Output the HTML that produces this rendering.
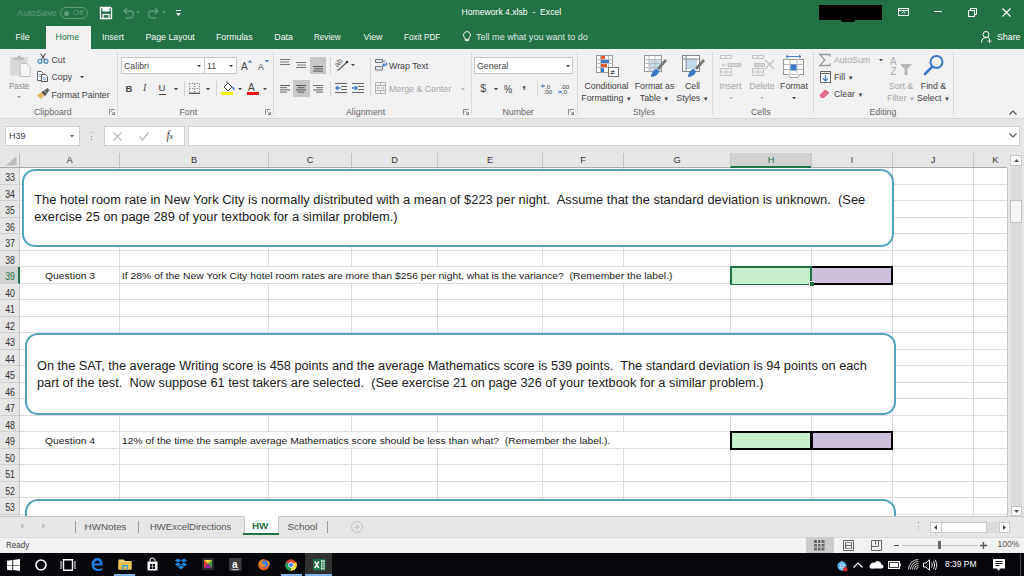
<!DOCTYPE html>
<html><head><meta charset="utf-8"><title>Excel</title>
<style>
*{margin:0;padding:0;box-sizing:border-box}
html,body{width:1024px;height:576px;overflow:hidden}
body{position:relative;font-family:"Liberation Sans",sans-serif;background:#fff}
.a{position:absolute}
.t{position:absolute;white-space:nowrap}
svg{position:absolute;overflow:visible}
</style></head><body>
<div class="a" style="left:0px;top:0px;width:1024px;height:49px;background:#217346"></div>
<div class="t" style="left:17px;top:3.8000000000000007px;line-height:18.4px;font-size:9.2px;color:#5e9b78;">AutoSave</div>
<div class="a" style="left:60px;top:7px;width:28px;height:12px;border:1px solid #5e9b78;border-radius:6px"></div>
<div class="a" style="left:64px;top:10.5px;width:5px;height:5px;background:#5e9b78;border-radius:50%"></div>
<div class="t" style="left:73px;top:5px;line-height:16px;font-size:8px;color:#5e9b78;">Off</div>
<svg style="left:100px;top:7px" width="12" height="12" viewBox="0 0 12 12"><path d="M0.5 0.5h10l1 1v10h-11z" fill="none" stroke="#fff" stroke-width="1.3"/><rect x="2.5" y="1" width="7" height="3.5" fill="#fff"/><rect x="3" y="7.5" width="6" height="4" fill="none" stroke="#fff" stroke-width="1.2"/></svg>
<svg style="left:122px;top:7px" width="12" height="12" viewBox="0 0 12 12"><path d="M3 4h5a3.5 3.5 0 0 1 0 7H4" fill="none" stroke="#5e9b78" stroke-width="1.3"/><path d="M5 1L2 4l3 3" fill="none" stroke="#5e9b78" stroke-width="1.3"/></svg>
<svg style="left:136px;top:11px" width="5" height="3" viewBox="0 0 5 3"><path d="M0 0h4l-2 2.5z" fill="#5e9b78"/></svg>
<svg style="left:148px;top:7px" width="12" height="12" viewBox="0 0 12 12"><path d="M9 4H4a3.5 3.5 0 0 0 0 7h4" fill="none" stroke="#5e9b78" stroke-width="1.3"/><path d="M7 1l3 3-3 3" fill="none" stroke="#5e9b78" stroke-width="1.3"/></svg>
<svg style="left:162px;top:11px" width="5" height="3" viewBox="0 0 5 3"><path d="M0 0h4l-2 2.5z" fill="#5e9b78"/></svg>
<svg style="left:176px;top:10px" width="6" height="7" viewBox="0 0 6 7"><rect x="0" y="0" width="5" height="1" fill="#fff"/><path d="M0 3h5l-2.5 3z" fill="#fff"/></svg>
<div class="t" style="left:461.5px;top:3.9499999999999993px;line-height:17.3px;font-size:8.65px;color:#fff;">Homework 4.xlsb&nbsp;&nbsp;-&nbsp;&nbsp;Excel</div>
<div class="a" style="left:818.5px;top:4.5px;width:63.5px;height:15px;background:#000"></div>
<div class="a" style="left:841px;top:18px;width:14px;height:4px;background:#000;border-radius:0 0 2px 2px"></div>
<svg style="left:898px;top:7.5px" width="11" height="8" viewBox="0 0 11 8"><rect x="0.5" y="0.5" width="10" height="7" fill="none" stroke="#fff" stroke-width="1"/><path d="M0.5 2.5h10" stroke="#fff" stroke-width="1"/><path d="M3.5 5.5l2-2 2 2" fill="none" stroke="#fff" stroke-width="0.9"/></svg>
<div class="a" style="left:934px;top:11px;width:8px;height:1px;background:#fff"></div>
<svg style="left:968px;top:7.5px" width="9" height="9" viewBox="0 0 9 9"><rect x="0.5" y="2.5" width="6" height="6" fill="none" stroke="#fff" stroke-width="1"/><path d="M2.5 2.5v-2h6v6h-2" fill="none" stroke="#fff" stroke-width="1"/></svg>
<svg style="left:1002px;top:7.5px" width="9" height="9" viewBox="0 0 9 9"><path d="M0.5 0.5l8 8M8.5 0.5l-8 8" stroke="#fff" stroke-width="1.1"/></svg>
<div class="a" style="left:46px;top:26px;width:45px;height:23px;background:#f1f1f1"></div>
<div class="t" style="left:15.5px;top:28.7px;line-height:17.6px;font-size:8.8px;color:#f4f8f5;">File</div>
<div class="t" style="left:55.6px;top:28.7px;line-height:17.6px;font-size:8.8px;color:#217346;">Home</div>
<div class="t" style="left:102px;top:28.7px;line-height:17.6px;font-size:8.8px;color:#f4f8f5;">Insert</div>
<div class="t" style="left:145.4px;top:28.7px;line-height:17.6px;font-size:8.8px;color:#f4f8f5;">Page Layout</div>
<div class="t" style="left:216px;top:28.7px;line-height:17.6px;font-size:8.8px;color:#f4f8f5;">Formulas</div>
<div class="t" style="left:274.3px;top:28.7px;line-height:17.6px;font-size:8.8px;color:#f4f8f5;">Data</div>
<div class="t" style="left:314.2px;top:28.7px;line-height:17.6px;font-size:8.8px;color:#f4f8f5;;transform:scaleX(0.92);transform-origin:0 50%">Review</div>
<div class="t" style="left:363.5px;top:28.7px;line-height:17.6px;font-size:8.8px;color:#f4f8f5;">View</div>
<div class="t" style="left:404.2px;top:28.7px;line-height:17.6px;font-size:8.8px;color:#f4f8f5;;transform:scaleX(0.93);transform-origin:0 50%">Foxit PDF</div>
<svg style="left:462.5px;top:31px" width="8" height="11" viewBox="0 0 8 11"><path d="M4 0.6a3.4 3.4 0 0 0-2 6.2v1.6h4V6.8a3.4 3.4 0 0 0-2-6.2z" fill="none" stroke="#e8f0eb" stroke-width="1"/><path d="M2 9.6h4" stroke="#e8f0eb" stroke-width="1"/></svg>
<div class="t" style="left:476px;top:28.7px;line-height:17.6px;font-size:8.8px;color:#dfe9e3;;transform:scaleX(1.03);transform-origin:0 50%">Tell me what you want to do</div>
<svg style="left:980.5px;top:30.5px" width="11" height="12" viewBox="0 0 11 12"><circle cx="5" cy="3.5" r="3" fill="none" stroke="#fff" stroke-width="1"/><path d="M0.5 11.5c0-3 2-5 4.5-5s3 .8 3.6 1.6" fill="none" stroke="#fff" stroke-width="1"/><path d="M8.5 8v4M6.5 10h4" stroke="#fff" stroke-width="1"/></svg>
<div class="t" style="left:997px;top:28.8px;line-height:17.6px;font-size:8.8px;color:#fff;">Share</div>
<div class="a" style="left:0px;top:49px;width:1024px;height:69px;background:#f1f1f1"></div>
<div class="a" style="left:0px;top:117.5px;width:1024px;height:1px;background:#d8d8d8"></div>
<div class="a" style="left:117px;top:52px;width:1px;height:62px;background:#dadada"></div>
<div class="a" style="left:273px;top:52px;width:1px;height:62px;background:#dadada"></div>
<div class="a" style="left:471px;top:52px;width:1px;height:62px;background:#dadada"></div>
<div class="a" style="left:577px;top:52px;width:1px;height:62px;background:#dadada"></div>
<div class="a" style="left:712px;top:52px;width:1px;height:62px;background:#dadada"></div>
<div class="a" style="left:813px;top:52px;width:1px;height:62px;background:#dadada"></div>
<div class="a" style="left:953px;top:52px;width:1px;height:62px;background:#dadada"></div>
<div class="a" style="left:183.5px;top:81px;width:1px;height:15px;background:#d4d4d4"></div>
<div class="a" style="left:216px;top:81px;width:1px;height:15px;background:#d4d4d4"></div>
<div class="a" style="left:329.5px;top:57px;width:1px;height:17px;background:#d4d4d4"></div>
<div class="a" style="left:329.5px;top:81px;width:1px;height:15px;background:#d4d4d4"></div>
<div class="a" style="left:369.5px;top:57px;width:1px;height:39px;background:#d4d4d4"></div>
<div class="a" style="left:536.6px;top:81px;width:1px;height:15px;background:#d4d4d4"></div>
<svg style="left:10px;top:55px" width="21" height="22" viewBox="0 0 21 22"><rect x="0.2" y="2" width="17.5" height="18.5" fill="#d9d8da"/><path d="M4 2.5h10v2.5H4z" fill="#bdbcbe"/><rect x="7.5" y="0.5" width="3" height="2.5" rx="1" fill="#bdbcbe"/><path d="M10.2 8.5h6.3l3.7 3.7v9.3h-10z" fill="#f4f3f5" stroke="#c0bfc1" stroke-width="1"/></svg>
<div class="t" style="left:9px;top:78.0px;line-height:17.6px;font-size:8.8px;color:#8c8c8c;;transform:scaleX(0.9);transform-origin:0 50%">Paste</div>
<svg style="left:16.5px;top:96px" width="4" height="3" viewBox="0 0 4 3"><path d="M0 0h4l-2 2.2z" fill="#a0a0a0"/></svg>
<svg style="left:36.5px;top:53px" width="12" height="11" viewBox="0 0 12 11"><path d="M3.5 0.5l4.5 6.5M8.5 0.5L4 7" stroke="#555" stroke-width="1.1" fill="none"/><circle cx="3" cy="8.3" r="2" fill="none" stroke="#4a86c8" stroke-width="1.2"/><circle cx="9" cy="8.3" r="2" fill="none" stroke="#4a86c8" stroke-width="1.2"/></svg>
<div class="t" style="left:51.5px;top:52.0px;line-height:17.6px;font-size:8.8px;color:#444;">Cut</div>
<svg style="left:37px;top:71px" width="11" height="11" viewBox="0 0 11 11"><path d="M0.5 0.5h4l1.5 1.5v7.5h-5.5z" fill="#fff" stroke="#666" stroke-width="1"/><path d="M1.8 3.5h2M1.8 5.5h2" stroke="#4a86c8" stroke-width="0.8"/><path d="M4.5 3.5h4l2 2v5h-6z" fill="#fff" stroke="#555" stroke-width="1"/><path d="M6 7h3M6 8.8h3" stroke="#4a86c8" stroke-width="0.8"/></svg>
<div class="t" style="left:51.5px;top:69.0px;line-height:17.6px;font-size:8.8px;color:#444;">Copy</div>
<svg style="left:79.5px;top:76px" width="4" height="3" viewBox="0 0 4 3"><path d="M0 0h4l-2 2.2z" fill="#444"/></svg>
<svg style="left:37px;top:88px" width="13" height="11" viewBox="0 0 13 11"><path d="M0 7.5l4-3.5 3.5 3.5-3.5 3.5z" fill="#e3b96c"/><path d="M4.5 4.5l2-2 3.5 3.5-2 2z" fill="#555"/><path d="M7 2.5l3.5-2.5 2 2-2.5 3.5z" fill="#666"/></svg>
<div class="t" style="left:51.5px;top:86.7px;line-height:17.6px;font-size:8.8px;color:#444;">Format Painter</div>
<div class="t" style="left:34px;top:104.0px;line-height:17.6px;font-size:8.8px;color:#666;">Clipboard</div>
<svg style="left:109px;top:109px" width="6" height="6" viewBox="0 0 6 6"><path d="M0.5 5.5v-5h5" fill="none" stroke="#8a8a8a" stroke-width="1"/><path d="M2 2l3.5 3.5M5.5 3v2.5H3" fill="none" stroke="#8a8a8a" stroke-width="1"/></svg>
<div class="a" style="left:121px;top:57px;width:84px;height:16.5px;background:#fff;border:1px solid #c6c6c6"></div>
<div class="a" style="left:204px;top:57px;width:32.5px;height:16.5px;background:#fff;border:1px solid #c6c6c6"></div>
<div class="t" style="left:124px;top:57.5px;line-height:17.6px;font-size:8.8px;color:#444;">Calibri</div>
<svg style="left:196.5px;top:64.5px" width="4" height="3" viewBox="0 0 4 3"><path d="M0 0h4l-2 2.2z" fill="#444"/></svg>
<div class="t" style="left:207px;top:57.5px;line-height:17.6px;font-size:8.8px;color:#444;">11</div>
<svg style="left:228.5px;top:64.5px" width="4" height="3" viewBox="0 0 4 3"><path d="M0 0h4l-2 2.2z" fill="#444"/></svg>
<div class="t" style="left:241px;top:56.8px;line-height:20px;font-size:10px;color:#444;">A</div>
<svg style="left:248px;top:59.5px" width="4" height="3" viewBox="0 0 4 3"><path d="M0 2.5l2-2.5 2 2.5z" fill="#3c78c3"/></svg>
<div class="t" style="left:258px;top:58.8px;line-height:17.0px;font-size:8.5px;color:#444;">A</div>
<svg style="left:264.5px;top:59.5px" width="4" height="3" viewBox="0 0 4 3"><path d="M0 0h4l-2 2.5z" fill="#3c78c3"/></svg>
<div class="t" style="left:125.5px;top:78.89999999999999px;line-height:19.0px;font-size:9.5px;color:#444;"><b>B</b></div>
<div class="t" style="left:143px;top:78.39999999999999px;line-height:20px;font-size:10px;color:#444;font-family:Liberation Serif"><i>I</i></div>
<div class="t" style="left:158.5px;top:78.3px;line-height:19.0px;font-size:9.5px;color:#444;">U</div>
<div class="a" style="left:158.5px;top:93.5px;width:7.5px;height:1px;background:#444"></div>
<svg style="left:173.5px;top:87.6px" width="4" height="3" viewBox="0 0 4 3"><path d="M0 0h4l-2 2.2z" fill="#444"/></svg>
<svg style="left:189px;top:82.5px" width="11" height="11" viewBox="0 0 11 11"><path d="M0.5 0.5h10v10M0.5 0.5v10M5.5 0.5v10M0.5 5.5h10" fill="none" stroke="#888" stroke-width="1" stroke-dasharray="1.2 1.3"/><path d="M0 10.3h11" stroke="#555" stroke-width="1.3"/></svg>
<svg style="left:205.5px;top:87.6px" width="4" height="3" viewBox="0 0 4 3"><path d="M0 0h4l-2 2.2z" fill="#444"/></svg>
<svg style="left:222px;top:80.5px" width="14" height="13" viewBox="0 0 14 13"><path d="M2 6l4-4 4 4-4 4z" fill="#fff" stroke="#444" stroke-width="1"/><path d="M5 2V0" stroke="#444"/><path d="M10.5 6c1 1.5 1.5 2.5 1.5 3" stroke="#3c78c3" stroke-width="1.4" fill="none"/></svg>
<div class="a" style="left:220.5px;top:91.5px;width:12.5px;height:3px;background:#f2f200"></div>
<svg style="left:237.5px;top:87.6px" width="4" height="3" viewBox="0 0 4 3"><path d="M0 0h4l-2 2.2z" fill="#444"/></svg>
<div class="t" style="left:248px;top:77.8px;line-height:20px;font-size:10px;color:#444;">A</div>
<div class="a" style="left:246.8px;top:91.5px;width:12px;height:3px;background:#e81010"></div>
<svg style="left:263px;top:87.6px" width="4" height="3" viewBox="0 0 4 3"><path d="M0 0h4l-2 2.2z" fill="#444"/></svg>
<div class="t" style="left:179.5px;top:104.0px;line-height:17.6px;font-size:8.8px;color:#666;">Font</div>
<svg style="left:265px;top:109px" width="6" height="6" viewBox="0 0 6 6"><path d="M0.5 5.5v-5h5" fill="none" stroke="#8a8a8a" stroke-width="1"/><path d="M2 2l3.5 3.5M5.5 3v2.5H3" fill="none" stroke="#8a8a8a" stroke-width="1"/></svg>
<div class="a" style="left:310px;top:57px;width:16px;height:17px;background:#c8c8c8"></div>
<svg style="left:280px;top:59px" width="14" height="14" viewBox="0 0 14 14"><path d="M0 0.5h10" stroke="#777" stroke-width="1"/><path d="M0 3.0h9" stroke="#777" stroke-width="1"/><path d="M0 5.5h10" stroke="#777" stroke-width="1"/></svg>
<svg style="left:296px;top:62px" width="14" height="14" viewBox="0 0 14 14"><path d="M0 0.5h10" stroke="#777" stroke-width="1"/><path d="M1 3.0h9" stroke="#777" stroke-width="1"/><path d="M0 5.5h10" stroke="#777" stroke-width="1"/></svg>
<svg style="left:312.5px;top:66px" width="14" height="14" viewBox="0 0 14 14"><path d="M0 0.5h10" stroke="#555" stroke-width="1"/><path d="M1 2.8h9" stroke="#555" stroke-width="1"/><path d="M0 5.1h10" stroke="#555" stroke-width="1"/></svg>
<svg style="left:335px;top:59px" width="14" height="12" viewBox="0 0 14 12"><text x="0" y="0" font-size="7.5" fill="#555" font-family="Liberation Sans" transform="translate(2.5 8.5) rotate(-50)">ab</text><path d="M3 11.5L12 3" stroke="#555" stroke-width="1.1"/><circle cx="12" cy="3" r="1.3" fill="#333"/></svg>
<svg style="left:350.5px;top:64px" width="4" height="3" viewBox="0 0 4 3"><path d="M0 0h4l-2 2.2z" fill="#444"/></svg>
<div class="a" style="left:293px;top:80px;width:16.5px;height:17px;background:#c8c8c8"></div>
<svg style="left:280px;top:84.5px" width="14" height="14" viewBox="0 0 14 14"><path d="M0 0.5h10" stroke="#666" stroke-width="1"/><path d="M0 2.7h7" stroke="#666" stroke-width="1"/><path d="M0 4.9h10" stroke="#666" stroke-width="1"/><path d="M0 7.1000000000000005h7" stroke="#666" stroke-width="1"/></svg>
<svg style="left:296px;top:84.5px" width="14" height="14" viewBox="0 0 14 14"><path d="M0 0.5h10" stroke="#555" stroke-width="1"/><path d="M1.5 2.7h7" stroke="#555" stroke-width="1"/><path d="M0 4.9h10" stroke="#555" stroke-width="1"/><path d="M1.5 7.1000000000000005h7" stroke="#555" stroke-width="1"/></svg>
<svg style="left:313px;top:84.5px" width="14" height="14" viewBox="0 0 14 14"><path d="M0 0.5h10" stroke="#666" stroke-width="1"/><path d="M3 2.7h7" stroke="#666" stroke-width="1"/><path d="M0 4.9h10" stroke="#666" stroke-width="1"/><path d="M3 7.1000000000000005h7" stroke="#666" stroke-width="1"/></svg>
<svg style="left:335px;top:83px" width="13" height="11" viewBox="0 0 13 11"><path d="M0 0.5h12M6 3.5h6M6 6.5h6M0 9.5h12" stroke="#666" stroke-width="1"/><path d="M5.5 5H1M3 3L1 5l2 2" stroke="#3c78c3" stroke-width="1.4" fill="none"/></svg>
<svg style="left:352px;top:83px" width="13" height="11" viewBox="0 0 13 11"><path d="M0 0.5h12M6 3.5h6M6 6.5h6M0 9.5h12" stroke="#666" stroke-width="1"/><path d="M0 5h4.5M3 3l2 2-2 2" stroke="#3c78c3" stroke-width="1.4" fill="none"/></svg>
<svg style="left:375px;top:59px" width="13" height="12" viewBox="0 0 13 12"><path d="M0.5 0.5h7v3h-7zM0.5 7.5h7v3.5h-7z" fill="#dde8f3" stroke="#777" stroke-width="1"/><path d="M7.5 2h3" stroke="#777"/><path d="M11.5 3.5v2.5H8M9.5 4.5l-1.5 1.5 1.5 1.5" fill="none" stroke="#3c78c3" stroke-width="1.2"/></svg>
<div class="t" style="left:389px;top:58.0px;line-height:17.6px;font-size:8.8px;color:#444;">Wrap Text</div>
<svg style="left:375px;top:82px" width="11" height="12" viewBox="0 0 11 12"><path d="M0.5 0.5h10v11h-10zM0.5 3.5h10M0.5 8.5h10M5.5 0.5v3M5.5 8.5v3" fill="none" stroke="#b5b5b5" stroke-width="1"/><path d="M2 6h7M3 5l-1 1 1 1M8 5l1 1-1 1" stroke="#b5b5b5" stroke-width="0.8" fill="none"/></svg>
<div class="t" style="left:389px;top:80.5px;line-height:17.6px;font-size:8.8px;color:#a6a6a6;">Merge &amp; Center</div>
<svg style="left:460.5px;top:87.6px" width="4" height="3" viewBox="0 0 4 3"><path d="M0 0h4l-2 2.2z" fill="#b8b8b8"/></svg>
<div class="t" style="left:346px;top:104.0px;line-height:17.6px;font-size:8.8px;color:#666;">Alignment</div>
<svg style="left:463px;top:109px" width="6" height="6" viewBox="0 0 6 6"><path d="M0.5 5.5v-5h5" fill="none" stroke="#8a8a8a" stroke-width="1"/><path d="M2 2l3.5 3.5M5.5 3v2.5H3" fill="none" stroke="#8a8a8a" stroke-width="1"/></svg>
<div class="a" style="left:474px;top:57px;width:99px;height:16.5px;background:#fff;border:1px solid #c6c6c6"></div>
<div class="t" style="left:477px;top:57.5px;line-height:17.6px;font-size:8.8px;color:#444;">General</div>
<svg style="left:565.5px;top:64.5px" width="4" height="3" viewBox="0 0 4 3"><path d="M0 0h4l-2 2.2z" fill="#444"/></svg>
<div class="t" style="left:480.3px;top:77.89999999999999px;line-height:21.0px;font-size:10.5px;color:#444;">$</div>
<svg style="left:493.5px;top:87.6px" width="4" height="3" viewBox="0 0 4 3"><path d="M0 0h4l-2 2.2z" fill="#444"/></svg>
<div class="t" style="left:503.8px;top:79.6px;line-height:20px;font-size:10px;color:#444;;transform:scaleX(0.92);transform-origin:0 50%">%</div>
<div class="t" style="left:522.3px;top:71.3px;line-height:26px;font-size:13px;color:#444;font-weight:bold">,</div>
<svg style="left:541px;top:83px" width="13" height="12" viewBox="0 0 13 12"><text x="4" y="5.5" font-size="6.2" fill="#444" font-family="Liberation Sans">.0</text><text x="2.5" y="11" font-size="6.2" fill="#444" font-family="Liberation Sans">.00</text><path d="M4 3H0.5M2 1.5L0.5 3 2 4.5" stroke="#3c78c3" fill="none" stroke-width="1"/></svg>
<svg style="left:558px;top:83px" width="13" height="12" viewBox="0 0 13 12"><text x="2.5" y="5.5" font-size="6.2" fill="#444" font-family="Liberation Sans">.00</text><text x="4" y="11" font-size="6.2" fill="#444" font-family="Liberation Sans">.0</text><path d="M0 9h3.5M2 7.5L3.5 9 2 10.5" stroke="#3c78c3" fill="none" stroke-width="1"/></svg>
<div class="t" style="left:502.5px;top:104.0px;line-height:17.6px;font-size:8.8px;color:#666;">Number</div>
<svg style="left:568px;top:109px" width="6" height="6" viewBox="0 0 6 6"><path d="M0.5 5.5v-5h5" fill="none" stroke="#8a8a8a" stroke-width="1"/><path d="M2 2l3.5 3.5M5.5 3v2.5H3" fill="none" stroke="#8a8a8a" stroke-width="1"/></svg>
<svg style="left:596px;top:55px" width="23" height="22" viewBox="0 0 23 22"><rect x="0.5" y="0.5" width="16" height="17" fill="#fff" stroke="#999"/><path d="M0.5 4.5h16M0.5 8.5h16M0.5 12.5h16M4.5 0.5v17M12.5 0.5v17" stroke="#bbb" stroke-width="1"/><rect x="5" y="1" width="4" height="3" fill="#e05a2b"/><rect x="5" y="5" width="8" height="3" fill="#3c78c3"/><rect x="5" y="9" width="6" height="3" fill="#e05a2b"/><rect x="5" y="13" width="3" height="4" fill="#3c78c3"/><rect x="12.5" y="12.5" width="10" height="9" fill="#fff" stroke="#777"/><text x="14.5" y="20" font-size="8" fill="#333" font-family="Liberation Sans">&#8800;</text></svg>
<div class="t" style="left:306.5px;width:600px;text-align:center;top:77.5px;line-height:17.6px;font-size:8.8px;color:#444;">Conditional</div>
<div class="t" style="left:306.5px;width:600px;text-align:center;top:89.8px;line-height:17.6px;font-size:8.8px;color:#444;">Formatting <span style="font-size:6px">&#9660;</span></div>
<svg style="left:644px;top:55px" width="24" height="23" viewBox="0 0 24 23"><rect x="0.5" y="0.5" width="17" height="16" fill="#fff" stroke="#999"/><rect x="5" y="4.5" width="12" height="11.5" fill="#c9d9ec"/><path d="M0.5 4.5h17M0.5 8.5h17M0.5 12.5h17M5 0.5v16M11 0.5v16" stroke="#bbb" stroke-width="1"/><path d="M21 4l2 2-8 9-2-2z" fill="#777"/><path d="M7 22c0-4 3-8 6-8l2 2c0 3-4 6-8 6z" fill="#3c78c3"/></svg>
<div class="t" style="left:354.5px;width:600px;text-align:center;top:77.5px;line-height:17.6px;font-size:8.8px;color:#444;">Format as</div>
<div class="t" style="left:354.5px;width:600px;text-align:center;top:89.8px;line-height:17.6px;font-size:8.8px;color:#444;">Table <span style="font-size:6px">&#9660;</span></div>
<svg style="left:682px;top:55px" width="23" height="23" viewBox="0 0 23 23"><rect x="0.5" y="0.5" width="17" height="16" fill="#fff" stroke="#888"/><rect x="4" y="4" width="11" height="10" fill="#c3d7ee"/><path d="M0.5 4h17M4 0.5v16" stroke="#888" stroke-width="1"/><path d="M21 4l2 2-8 9-2-2z" fill="#777"/><path d="M6 22c0-4 3-8 6-8l2 2c0 3-4 6-8 6z" fill="#3c78c3"/></svg>
<div class="t" style="left:392.5px;width:600px;text-align:center;top:77.5px;line-height:17.6px;font-size:8.8px;color:#444;">Cell</div>
<div class="t" style="left:392.5px;width:600px;text-align:center;top:89.8px;line-height:17.6px;font-size:8.8px;color:#444;">Styles <span style="font-size:6px">&#9660;</span></div>
<div class="t" style="left:632.5px;top:104.0px;line-height:17.6px;font-size:8.8px;color:#666;;transform:scaleX(0.92);transform-origin:0 50%">Styles</div>
<svg style="left:720px;top:55px" width="22" height="22" viewBox="0 0 22 22"><path d="M0.5 0.5h11v3h-11zM0.5 0.5v3M6 0.5v3" fill="none" stroke="#c3c3c3"/><path d="M8 8.5h13v3H8z" fill="#d6d6d6" stroke="#c3c3c3"/><path d="M2 10h4M3.5 8.5L2 10l1.5 1.5" stroke="#c3c3c3" fill="none"/><path d="M0.5 13.5h11v7h-11zM0.5 17h11M6 13.5v7" fill="none" stroke="#c3c3c3"/></svg>
<div class="t" style="left:430.5px;width:600px;text-align:center;top:77.5px;line-height:17.6px;font-size:8.8px;color:#a6a6a6;">Insert</div>
<svg style="left:728.5px;top:96.5px" width="4" height="3" viewBox="0 0 4 3"><path d="M0 0h4l-2 2.2z" fill="#b8b8b8"/></svg>
<svg style="left:752px;top:55px" width="23" height="22" viewBox="0 0 23 22"><path d="M0.5 0.5h11v3h-11zM6 0.5v3" fill="none" stroke="#c3c3c3"/><path d="M2.5 8.5h10v3h-10z" fill="#d6d6d6" stroke="#c3c3c3"/><path d="M13 5l9 9M22 5l-9 9" stroke="#c3c3c3" stroke-width="1.3"/><path d="M0.5 13.5h11v7h-11zM0.5 17h11M6 13.5v7" fill="none" stroke="#c3c3c3"/></svg>
<div class="t" style="left:462px;width:600px;text-align:center;top:77.5px;line-height:17.6px;font-size:8.8px;color:#a6a6a6;">Delete</div>
<svg style="left:760px;top:96.5px" width="4" height="3" viewBox="0 0 4 3"><path d="M0 0h4l-2 2.2z" fill="#b8b8b8"/></svg>
<svg style="left:783px;top:55px" width="22" height="23" viewBox="0 0 22 23"><path d="M3 1.5h15M3 1.5l2-1.5M3 1.5l2 1.5M18 1.5l-2-1.5M18 1.5l-2 1.5" stroke="#3c78c3" fill="none" stroke-width="0.9"/><rect x="0.5" y="4.5" width="20" height="15" fill="#fff" stroke="#999"/><path d="M0.5 9.5h20M0.5 14.5h20M7 4.5v15M14 4.5v15" stroke="#bbb"/><rect x="7.5" y="9.5" width="6" height="6" fill="#3c78c3"/><path d="M5 19.5l2 3h8l2-3" fill="#fff" stroke="#999"/></svg>
<div class="t" style="left:494px;width:600px;text-align:center;top:77.5px;line-height:17.6px;font-size:8.8px;color:#444;">Format</div>
<svg style="left:792px;top:96.5px" width="4" height="3" viewBox="0 0 4 3"><path d="M0 0h4l-2 2.2z" fill="#444"/></svg>
<div class="t" style="left:751px;top:104.0px;line-height:17.6px;font-size:8.8px;color:#666;">Cells</div>
<svg style="left:819px;top:54px" width="12" height="12" viewBox="0 0 12 12"><path d="M11 2.5V0.5H0.8l5 5.5-5 5.5H11v-2" fill="none" stroke="#999" stroke-width="1.3"/></svg>
<div class="t" style="left:834px;top:52.0px;line-height:17.6px;font-size:8.8px;color:#a6a6a6;">AutoSum</div>
<svg style="left:878.5px;top:59px" width="4" height="3" viewBox="0 0 4 3"><path d="M0 0h4l-2 2.2z" fill="#444"/></svg>
<svg style="left:820px;top:71px" width="11" height="12" viewBox="0 0 11 12"><rect x="0.5" y="0.5" width="10" height="11" fill="#fff" stroke="#666"/><path d="M0.5 2.5h10" stroke="#666"/><path d="M5.5 4v6M3 7.5l2.5 2.5 2.5-2.5" fill="none" stroke="#3c78c3" stroke-width="1.2"/></svg>
<div class="t" style="left:834px;top:69.0px;line-height:17.6px;font-size:8.8px;color:#444;">Fill <span style="font-size:6px">&#9660;</span></div>
<svg style="left:819px;top:89px" width="12" height="10" viewBox="0 0 12 10"><path d="M0.5 6l5.5-5.5 4.5 3-5.5 5.5h-3z" fill="#e06d8a"/></svg>
<div class="t" style="left:834px;top:86.0px;line-height:17.6px;font-size:8.8px;color:#444;">Clear <span style="font-size:6px">&#9660;</span></div>
<svg style="left:890px;top:56px" width="23" height="20" viewBox="0 0 23 20"><text x="0" y="8.5" font-size="10" fill="#aaa" font-family="Liberation Sans">A</text><text x="0.5" y="19" font-size="10" fill="#aaa" font-family="Liberation Sans">Z</text><path d="M10 8h12l-4.5 5v6h-3v-6z" fill="#b8b8b8"/></svg>
<div class="t" style="left:601px;width:600px;text-align:center;top:77.6px;line-height:17.6px;font-size:8.8px;color:#a6a6a6;">Sort &amp;</div>
<div class="t" style="left:601px;width:600px;text-align:center;top:89.7px;line-height:17.6px;font-size:8.8px;color:#a6a6a6;">Filter <span style="font-size:6px">&#9660;</span></div>
<svg style="left:923px;top:54px" width="22" height="22" viewBox="0 0 22 22"><circle cx="13.5" cy="8" r="6" fill="none" stroke="#3c78c3" stroke-width="2"/><path d="M9.5 12.5L2 20" stroke="#3c78c3" stroke-width="2.6" stroke-linecap="round"/></svg>
<div class="t" style="left:633.5px;width:600px;text-align:center;top:77.6px;line-height:17.6px;font-size:8.8px;color:#444;">Find &amp;</div>
<div class="t" style="left:633.5px;width:600px;text-align:center;top:89.7px;line-height:17.6px;font-size:8.8px;color:#444;">Select <span style="font-size:6px">&#9660;</span></div>
<div class="t" style="left:869.5px;top:104.0px;line-height:17.6px;font-size:8.8px;color:#666;">Editing</div>
<svg style="left:1009px;top:110px" width="8" height="5" viewBox="0 0 8 5"><path d="M0.5 4.5l3.5-3.5 3.5 3.5" fill="none" stroke="#555" stroke-width="1.2"/></svg>
<div class="a" style="left:0px;top:118.5px;width:1024px;height:50px;background:#e6e6e6"></div>
<div class="a" style="left:5px;top:126px;width:74.5px;height:19.5px;background:#fff;border:1px solid #d0d0d0"></div>
<div class="t" style="left:9px;top:127px;line-height:18px;font-size:9px;color:#444;">H39</div>
<svg style="left:70px;top:134.5px" width="4" height="3" viewBox="0 0 4 3"><path d="M0 0h4l-2 2.2z" fill="#555"/></svg>
<div class="a" style="left:90.5px;top:132px;width:1px;height:1.2px;background:#888"></div>
<div class="a" style="left:90.5px;top:135.5px;width:1px;height:1.2px;background:#888"></div>
<div class="a" style="left:90.5px;top:139px;width:1px;height:1.2px;background:#888"></div>
<div class="a" style="left:103.5px;top:126px;width:81px;height:19.5px;background:#fff;border:1px solid #d0d0d0"></div>
<svg style="left:113px;top:131.5px" width="9" height="9" viewBox="0 0 9 9"><path d="M0.5 0.5l8 8M8.5 0.5l-8 8" stroke="#bdbdbd" stroke-width="1.3"/></svg>
<svg style="left:139px;top:131.5px" width="10" height="9" viewBox="0 0 10 9"><path d="M0.5 4.5l3 3.5 6-7.5" fill="none" stroke="#c2c2c2" stroke-width="1.6"/></svg>
<div class="t" style="left:166.5px;top:123.80000000000001px;line-height:23.0px;font-size:11.5px;color:#444;font-family:Liberation Serif;letter-spacing:-0.5px"><i>f</i><span style="font-size:9px"><i>x</i></span></div>
<div class="a" style="left:187.5px;top:126px;width:832px;height:19.5px;background:#fff;border:1px solid #d0d0d0"></div>
<svg style="left:1009px;top:133px" width="8" height="5" viewBox="0 0 8 5"><path d="M0.5 0.5l3.5 3.5 3.5-3.5" fill="none" stroke="#555" stroke-width="1.1"/></svg>
<div class="a" style="left:0px;top:153px;width:1008px;height:15px;background:#e6e6e6"></div>
<div class="a" style="left:730px;top:153px;width:81px;height:15px;background:#d2d2d2"></div>
<div class="a" style="left:0px;top:167px;width:1008px;height:1px;background:#ababab"></div>
<div class="a" style="left:730px;top:166px;width:81px;height:2px;background:#217346"></div>
<div class="a" style="left:119px;top:153px;width:1px;height:14px;background:#c4c4c4"></div>
<div class="a" style="left:268px;top:153px;width:1px;height:14px;background:#c4c4c4"></div>
<div class="a" style="left:351px;top:153px;width:1px;height:14px;background:#c4c4c4"></div>
<div class="a" style="left:437px;top:153px;width:1px;height:14px;background:#c4c4c4"></div>
<div class="a" style="left:542px;top:153px;width:1px;height:14px;background:#c4c4c4"></div>
<div class="a" style="left:623px;top:153px;width:1px;height:14px;background:#c4c4c4"></div>
<div class="a" style="left:730px;top:153px;width:1px;height:14px;background:#c4c4c4"></div>
<div class="a" style="left:811px;top:153px;width:1px;height:14px;background:#c4c4c4"></div>
<div class="a" style="left:892px;top:153px;width:1px;height:14px;background:#c4c4c4"></div>
<div class="a" style="left:973px;top:153px;width:1px;height:14px;background:#c4c4c4"></div>
<div class="t" style="left:-230.5px;width:600px;text-align:center;top:151.2px;line-height:18.6px;font-size:9.3px;color:#3a3a3a;">A</div>
<div class="t" style="left:-106.0px;width:600px;text-align:center;top:151.2px;line-height:18.6px;font-size:9.3px;color:#3a3a3a;">B</div>
<div class="t" style="left:10.0px;width:600px;text-align:center;top:151.2px;line-height:18.6px;font-size:9.3px;color:#3a3a3a;">C</div>
<div class="t" style="left:94.5px;width:600px;text-align:center;top:151.2px;line-height:18.6px;font-size:9.3px;color:#3a3a3a;">D</div>
<div class="t" style="left:190.0px;width:600px;text-align:center;top:151.2px;line-height:18.6px;font-size:9.3px;color:#3a3a3a;">E</div>
<div class="t" style="left:283.0px;width:600px;text-align:center;top:151.2px;line-height:18.6px;font-size:9.3px;color:#3a3a3a;">F</div>
<div class="t" style="left:377.0px;width:600px;text-align:center;top:151.2px;line-height:18.6px;font-size:9.3px;color:#3a3a3a;">G</div>
<div class="t" style="left:471.0px;width:600px;text-align:center;top:151.2px;line-height:18.6px;font-size:9.3px;color:#217346;">H</div>
<div class="t" style="left:552.0px;width:600px;text-align:center;top:151.2px;line-height:18.6px;font-size:9.3px;color:#3a3a3a;">I</div>
<div class="t" style="left:633.0px;width:600px;text-align:center;top:151.2px;line-height:18.6px;font-size:9.3px;color:#3a3a3a;">J</div>
<div class="t" style="left:695.4px;width:600px;text-align:center;top:151.2px;line-height:18.6px;font-size:9.3px;color:#3a3a3a;">K</div>
<svg style="left:4px;top:156px" width="13" height="10" viewBox="0 0 13 10"><path d="M12.5 0.5v9h-11z" fill="#bcbcbc"/></svg>
<div class="a" style="left:19px;top:168px;width:989px;height:348px;background:#fff"></div>
<div class="a" style="left:0px;top:168px;width:19px;height:348px;background:#e6e6e6"></div>
<div class="a" style="left:19px;top:168px;width:1px;height:348px;background:#c8c8c8"></div>
<div class="a" style="left:19px;top:153px;width:1px;height:15px;background:#bdbdbd"></div>
<div class="t" style="left:-290.2px;width:600px;text-align:center;top:167.8px;line-height:20.4px;font-size:10.2px;color:#333;letter-spacing:-0.2px;transform:scaleX(0.86);transform-origin:50% 50%">33</div>
<div class="a" style="left:0px;top:184px;width:19px;height:1px;background:#cfcfcf"></div>
<div class="t" style="left:-290.2px;width:600px;text-align:center;top:184.8px;line-height:20.4px;font-size:10.2px;color:#333;letter-spacing:-0.2px;transform:scaleX(0.86);transform-origin:50% 50%">34</div>
<div class="a" style="left:0px;top:200px;width:19px;height:1px;background:#cfcfcf"></div>
<div class="t" style="left:-290.2px;width:600px;text-align:center;top:200.8px;line-height:20.4px;font-size:10.2px;color:#333;letter-spacing:-0.2px;transform:scaleX(0.86);transform-origin:50% 50%">35</div>
<div class="a" style="left:0px;top:217px;width:19px;height:1px;background:#cfcfcf"></div>
<div class="t" style="left:-290.2px;width:600px;text-align:center;top:217.8px;line-height:20.4px;font-size:10.2px;color:#333;letter-spacing:-0.2px;transform:scaleX(0.86);transform-origin:50% 50%">36</div>
<div class="a" style="left:0px;top:233px;width:19px;height:1px;background:#cfcfcf"></div>
<div class="t" style="left:-290.2px;width:600px;text-align:center;top:233.8px;line-height:20.4px;font-size:10.2px;color:#333;letter-spacing:-0.2px;transform:scaleX(0.86);transform-origin:50% 50%">37</div>
<div class="a" style="left:0px;top:250px;width:19px;height:1px;background:#cfcfcf"></div>
<div class="t" style="left:-290.2px;width:600px;text-align:center;top:250.8px;line-height:20.4px;font-size:10.2px;color:#333;letter-spacing:-0.2px;transform:scaleX(0.86);transform-origin:50% 50%">38</div>
<div class="a" style="left:0px;top:266px;width:19px;height:1px;background:#cfcfcf"></div>
<div class="a" style="left:0px;top:267px;width:19px;height:16px;background:#d2d2d2"></div>
<div class="a" style="left:18px;top:267px;width:1.6px;height:17px;background:#217346"></div>
<div class="t" style="left:-290.2px;width:600px;text-align:center;top:266.8px;line-height:20.4px;font-size:10.2px;color:#217346;letter-spacing:-0.2px;transform:scaleX(0.86);transform-origin:50% 50%">39</div>
<div class="a" style="left:0px;top:283px;width:19px;height:1px;background:#cfcfcf"></div>
<div class="t" style="left:-290.2px;width:600px;text-align:center;top:283.8px;line-height:20.4px;font-size:10.2px;color:#333;letter-spacing:-0.2px;transform:scaleX(0.86);transform-origin:50% 50%">40</div>
<div class="a" style="left:0px;top:299px;width:19px;height:1px;background:#cfcfcf"></div>
<div class="t" style="left:-290.2px;width:600px;text-align:center;top:299.8px;line-height:20.4px;font-size:10.2px;color:#333;letter-spacing:-0.2px;transform:scaleX(0.86);transform-origin:50% 50%">41</div>
<div class="a" style="left:0px;top:316px;width:19px;height:1px;background:#cfcfcf"></div>
<div class="t" style="left:-290.2px;width:600px;text-align:center;top:316.8px;line-height:20.4px;font-size:10.2px;color:#333;letter-spacing:-0.2px;transform:scaleX(0.86);transform-origin:50% 50%">42</div>
<div class="a" style="left:0px;top:332px;width:19px;height:1px;background:#cfcfcf"></div>
<div class="t" style="left:-290.2px;width:600px;text-align:center;top:332.8px;line-height:20.4px;font-size:10.2px;color:#333;letter-spacing:-0.2px;transform:scaleX(0.86);transform-origin:50% 50%">43</div>
<div class="a" style="left:0px;top:349px;width:19px;height:1px;background:#cfcfcf"></div>
<div class="t" style="left:-290.2px;width:600px;text-align:center;top:349.8px;line-height:20.4px;font-size:10.2px;color:#333;letter-spacing:-0.2px;transform:scaleX(0.86);transform-origin:50% 50%">44</div>
<div class="a" style="left:0px;top:365px;width:19px;height:1px;background:#cfcfcf"></div>
<div class="t" style="left:-290.2px;width:600px;text-align:center;top:365.8px;line-height:20.4px;font-size:10.2px;color:#333;letter-spacing:-0.2px;transform:scaleX(0.86);transform-origin:50% 50%">45</div>
<div class="a" style="left:0px;top:382px;width:19px;height:1px;background:#cfcfcf"></div>
<div class="t" style="left:-290.2px;width:600px;text-align:center;top:382.8px;line-height:20.4px;font-size:10.2px;color:#333;letter-spacing:-0.2px;transform:scaleX(0.86);transform-origin:50% 50%">46</div>
<div class="a" style="left:0px;top:398px;width:19px;height:1px;background:#cfcfcf"></div>
<div class="t" style="left:-290.2px;width:600px;text-align:center;top:398.8px;line-height:20.4px;font-size:10.2px;color:#333;letter-spacing:-0.2px;transform:scaleX(0.86);transform-origin:50% 50%">47</div>
<div class="a" style="left:0px;top:415px;width:19px;height:1px;background:#cfcfcf"></div>
<div class="t" style="left:-290.2px;width:600px;text-align:center;top:415.8px;line-height:20.4px;font-size:10.2px;color:#333;letter-spacing:-0.2px;transform:scaleX(0.86);transform-origin:50% 50%">48</div>
<div class="a" style="left:0px;top:431px;width:19px;height:1px;background:#cfcfcf"></div>
<div class="t" style="left:-290.2px;width:600px;text-align:center;top:431.8px;line-height:20.4px;font-size:10.2px;color:#333;letter-spacing:-0.2px;transform:scaleX(0.86);transform-origin:50% 50%">49</div>
<div class="a" style="left:0px;top:448px;width:19px;height:1px;background:#cfcfcf"></div>
<div class="t" style="left:-290.2px;width:600px;text-align:center;top:448.8px;line-height:20.4px;font-size:10.2px;color:#333;letter-spacing:-0.2px;transform:scaleX(0.86);transform-origin:50% 50%">50</div>
<div class="a" style="left:0px;top:464px;width:19px;height:1px;background:#cfcfcf"></div>
<div class="t" style="left:-290.2px;width:600px;text-align:center;top:464.8px;line-height:20.4px;font-size:10.2px;color:#333;letter-spacing:-0.2px;transform:scaleX(0.86);transform-origin:50% 50%">51</div>
<div class="a" style="left:0px;top:481px;width:19px;height:1px;background:#cfcfcf"></div>
<div class="t" style="left:-290.2px;width:600px;text-align:center;top:481.8px;line-height:20.4px;font-size:10.2px;color:#333;letter-spacing:-0.2px;transform:scaleX(0.86);transform-origin:50% 50%">52</div>
<div class="a" style="left:0px;top:497px;width:19px;height:1px;background:#cfcfcf"></div>
<div class="t" style="left:-290.2px;width:600px;text-align:center;top:497.8px;line-height:20.4px;font-size:10.2px;color:#333;letter-spacing:-0.2px;transform:scaleX(0.86);transform-origin:50% 50%">53</div>
<div class="a" style="left:0px;top:514px;width:19px;height:1px;background:#cfcfcf"></div>
<div class="a" style="left:20px;top:184px;width:988px;height:1px;background:#dcdcdc"></div>
<div class="a" style="left:20px;top:200px;width:988px;height:1px;background:#dcdcdc"></div>
<div class="a" style="left:20px;top:217px;width:988px;height:1px;background:#dcdcdc"></div>
<div class="a" style="left:20px;top:233px;width:988px;height:1px;background:#dcdcdc"></div>
<div class="a" style="left:20px;top:250px;width:988px;height:1px;background:#dcdcdc"></div>
<div class="a" style="left:20px;top:266px;width:988px;height:1px;background:#dcdcdc"></div>
<div class="a" style="left:20px;top:283px;width:988px;height:1px;background:#dcdcdc"></div>
<div class="a" style="left:20px;top:299px;width:988px;height:1px;background:#dcdcdc"></div>
<div class="a" style="left:20px;top:316px;width:988px;height:1px;background:#dcdcdc"></div>
<div class="a" style="left:20px;top:332px;width:988px;height:1px;background:#dcdcdc"></div>
<div class="a" style="left:20px;top:349px;width:988px;height:1px;background:#dcdcdc"></div>
<div class="a" style="left:20px;top:365px;width:988px;height:1px;background:#dcdcdc"></div>
<div class="a" style="left:20px;top:382px;width:988px;height:1px;background:#dcdcdc"></div>
<div class="a" style="left:20px;top:398px;width:988px;height:1px;background:#dcdcdc"></div>
<div class="a" style="left:20px;top:415px;width:988px;height:1px;background:#dcdcdc"></div>
<div class="a" style="left:20px;top:431px;width:988px;height:1px;background:#dcdcdc"></div>
<div class="a" style="left:20px;top:448px;width:988px;height:1px;background:#dcdcdc"></div>
<div class="a" style="left:20px;top:464px;width:988px;height:1px;background:#dcdcdc"></div>
<div class="a" style="left:20px;top:481px;width:988px;height:1px;background:#dcdcdc"></div>
<div class="a" style="left:20px;top:497px;width:988px;height:1px;background:#dcdcdc"></div>
<div class="a" style="left:20px;top:514px;width:988px;height:1px;background:#dcdcdc"></div>
<div class="a" style="left:119px;top:168px;width:1px;height:348px;background:#dcdcdc"></div>
<div class="a" style="left:268px;top:168px;width:1px;height:348px;background:#dcdcdc"></div>
<div class="a" style="left:351px;top:168px;width:1px;height:348px;background:#dcdcdc"></div>
<div class="a" style="left:437px;top:168px;width:1px;height:348px;background:#dcdcdc"></div>
<div class="a" style="left:542px;top:168px;width:1px;height:348px;background:#dcdcdc"></div>
<div class="a" style="left:623px;top:168px;width:1px;height:348px;background:#dcdcdc"></div>
<div class="a" style="left:730px;top:168px;width:1px;height:348px;background:#dcdcdc"></div>
<div class="a" style="left:811px;top:168px;width:1px;height:348px;background:#dcdcdc"></div>
<div class="a" style="left:892px;top:168px;width:1px;height:348px;background:#dcdcdc"></div>
<div class="a" style="left:973px;top:168px;width:1px;height:348px;background:#dcdcdc"></div>
<div class="a" style="left:120px;top:267px;width:610px;height:16px;background:#fff"></div>
<div class="a" style="left:120px;top:432px;width:610px;height:16px;background:#fff"></div>
<div class="t" style="left:44.5px;top:266.2px;line-height:19.2px;font-size:9.6px;color:#1a1a1a;;transform:scaleX(1.08);transform-origin:0 50%">Question 3</div>
<div class="t" style="left:121.8px;top:266.2px;line-height:19.2px;font-size:9.6px;color:#1a1a1a;;transform:scaleX(1.0775);transform-origin:0 50%">If 28% of the New York City hotel room rates are more than $256 per night, what is the variance?&nbsp; (Remember the label.)</div>
<div class="t" style="left:44.5px;top:431.2px;line-height:19.2px;font-size:9.6px;color:#1a1a1a;;transform:scaleX(1.08);transform-origin:0 50%">Question 4</div>
<div class="t" style="left:121.8px;top:431.2px;line-height:19.2px;font-size:9.6px;color:#1a1a1a;;transform:scaleX(1.0762);transform-origin:0 50%">12% of the time the sample average Mathematics score should be less than what?&nbsp; (Remember the label.).</div>
<div class="a" style="left:730px;top:266px;width:82px;height:18.5px;background:#c6efce;border:2px solid #217346;border-bottom-width:1.5px"></div>
<div class="a" style="left:812px;top:266px;width:81px;height:18.5px;background:#ccc0da;border:2px solid #000;border-left:0"></div>
<div class="a" style="left:810.5px;top:268px;width:1.5px;height:14.5px;background:#217346"></div>
<div class="a" style="left:809px;top:281px;width:5px;height:5px;background:#fff"></div>
<div class="a" style="left:810px;top:282px;width:4px;height:4px;background:#217346"></div>
<div class="a" style="left:730px;top:431px;width:82px;height:19px;background:#c6efce;border:2px solid #000"></div>
<div class="a" style="left:811px;top:431px;width:82px;height:19px;background:#ccc0da;border:2px solid #000"></div>
<div class="a" style="left:22.35px;top:169.15px;width:871.45px;height:77.7px;background:#fff;border:2.5px solid #52a3bd;border-radius:13px"></div>
<div class="t" style="left:34.2px;top:186.65px;line-height:25.7px;font-size:12.85px;color:#202020;letter-spacing:0.03px">The hotel room rate in New York City is normally distributed with a mean of $223 per night.&nbsp; Assume that the standard deviation is unknown.&nbsp; (See</div>
<div class="t" style="left:34.2px;top:203.85px;line-height:25.7px;font-size:12.85px;color:#202020;">exercise 25 on page 289 of your textbook for a similar problem.)</div>
<div class="a" style="left:24.75px;top:332.75px;width:871.25px;height:82.2px;background:#fff;border:2.5px solid #52a3bd;border-radius:13px"></div>
<div class="t" style="left:36.7px;top:352.65px;line-height:25.7px;font-size:12.85px;color:#202020;;transform:scaleX(0.9925);transform-origin:0 50%">On the SAT, the average Writing score is 458 points and the average Mathematics score is 539 points.&nbsp; The standard deviation is 94 points on each</div>
<div class="t" style="left:36.7px;top:369.65px;line-height:25.7px;font-size:12.85px;color:#202020;;transform:scaleX(0.9958);transform-origin:0 50%">part of the test.&nbsp; Now suppose 61 test takers are selected.&nbsp; (See exercise 21 on page 326 of your textbook for a similar problem.)</div>
<div class="a" style="left:24.65px;top:498.55px;width:871.35px;height:40px;background:#fff;border:2.5px solid #52a3bd;border-radius:13px"></div>
<div class="a" style="left:1007px;top:153px;width:17px;height:363px;background:#e6e6e6"></div>
<div class="a" style="left:1007px;top:168px;width:1px;height:348px;background:#c6c6c6"></div>
<div class="a" style="left:1010.5px;top:166px;width:11px;height:340px;background:#dcdcdc"></div>
<div class="a" style="left:1010.2px;top:155px;width:11.5px;height:11px;background:#fff;border:1px solid #c8c8c8"></div>
<svg style="left:1013.5px;top:159px" width="5" height="3" viewBox="0 0 5 3"><path d="M0 3h5L2.5 0z" fill="#555"/></svg>
<div class="a" style="left:1010.2px;top:199.8px;width:11.5px;height:23px;background:#f4f4f4;border:1px solid #c2c2c2"></div>
<div class="a" style="left:1010.5px;top:506px;width:11px;height:10px;background:#fff;border:1px solid #c8c8c8"></div>
<svg style="left:1013.5px;top:510px" width="5" height="3" viewBox="0 0 5 3"><path d="M0 0h5L2.5 3z" fill="#555"/></svg>
<div class="a" style="left:0px;top:516px;width:1024px;height:21px;background:#e6e6e6"></div>
<div class="a" style="left:0px;top:516px;width:243.5px;height:1px;background:#c6c6c6"></div>
<div class="a" style="left:279px;top:516px;width:745px;height:1px;background:#c6c6c6"></div>
<svg style="left:20px;top:523px" width="4" height="6" viewBox="0 0 4 6"><path d="M3.5 0v6L0 3z" fill="#c0c0c0"/></svg>
<svg style="left:42px;top:523px" width="4" height="6" viewBox="0 0 4 6"><path d="M0 0v6l3.5-3z" fill="#c0c0c0"/></svg>
<div class="a" style="left:75px;top:521px;width:1px;height:12px;background:#9a9a9a"></div>
<div class="a" style="left:137.5px;top:521px;width:1px;height:12px;background:#9a9a9a"></div>
<div class="a" style="left:326.5px;top:521px;width:1px;height:12px;background:#9a9a9a"></div>
<div class="t" style="left:84.6px;top:516.5px;line-height:19.6px;font-size:9.8px;color:#555;;transform:scaleX(1.0);transform-origin:0 50%">HWNotes</div>
<div class="t" style="left:149.5px;top:516.5px;line-height:19.6px;font-size:9.8px;color:#555;;transform:scaleX(0.97);transform-origin:0 50%">HWExcelDirections</div>
<div class="a" style="left:243.5px;top:516px;width:35.5px;height:18px;background:#fff;border-left:1px solid #c6c6c6;border-right:1px solid #c6c6c6"></div>
<div class="a" style="left:243.3px;top:532.8px;width:35.4px;height:1.9px;background:#217346"></div>
<div class="t" style="left:252px;top:515.8000000000001px;line-height:19.6px;font-size:9.8px;color:#217346;;transform:scaleX(1.0);transform-origin:0 50%"><b>HW</b></div>
<div class="t" style="left:287.5px;top:516.5px;line-height:19.6px;font-size:9.8px;color:#555;;transform:scaleX(1.0);transform-origin:0 50%">School</div>
<svg style="left:351px;top:521px" width="12" height="12" viewBox="0 0 12 12"><circle cx="6" cy="6" r="5.5" fill="none" stroke="#c2c2c2" stroke-width="1"/><path d="M6 3v6M3 6h6" stroke="#c2c2c2" stroke-width="1"/></svg>
<div class="a" style="left:918px;top:522px;width:1px;height:1.2px;background:#999"></div>
<div class="a" style="left:918px;top:525.5px;width:1px;height:1.2px;background:#999"></div>
<div class="a" style="left:918px;top:529px;width:1px;height:1.2px;background:#999"></div>
<div class="a" style="left:930px;top:521.5px;width:11.5px;height:11px;background:#fff;border:1px solid #c8c8c8"></div>
<svg style="left:934px;top:524.5px" width="3" height="5" viewBox="0 0 3 5"><path d="M3 0v5L0 2.5z" fill="#444"/></svg>
<div class="a" style="left:941px;top:521.5px;width:45.5px;height:11px;background:#fff;border:1px solid #c8c8c8"></div>
<div class="a" style="left:986.5px;top:521.5px;width:11px;height:11px;background:#dcdcdc"></div>
<div class="a" style="left:998.5px;top:521.5px;width:11.5px;height:11px;background:#fff;border:1px solid #c8c8c8"></div>
<svg style="left:1003px;top:524.5px" width="3" height="5" viewBox="0 0 3 5"><path d="M0 0v5l3-2.5z" fill="#444"/></svg>
<div class="a" style="left:0px;top:537px;width:1024px;height:16px;background:#f1f1f1"></div>
<div class="a" style="left:0px;top:537px;width:1024px;height:1px;background:#d9d9d9"></div>
<div class="t" style="left:5.5px;top:537.2px;line-height:17.6px;font-size:8.8px;color:#444;;transform:scaleX(0.92);transform-origin:0 50%">Ready</div>
<div class="a" style="left:805.5px;top:537px;width:28px;height:16px;background:#cbcbcb"></div>
<svg style="left:813.5px;top:540px" width="11" height="10.5" viewBox="0 0 11 10.5"><rect x="0" y="0" width="10.5" height="10.5" fill="#6a6a6a"/><path d="M3.5 0v10.5M7 0v10.5M0 3.5h10.5M0 7h10.5" stroke="#cbcbcb" stroke-width="1"/></svg>
<svg style="left:842.5px;top:540px" width="11" height="11" viewBox="0 0 11 11"><path d="M0.5 0.5h10v10h-10z" fill="none" stroke="#666"/><path d="M2.5 2v7M8.5 2v7M2.5 5.5h6" fill="none" stroke="#666" stroke-width="1"/><path d="M2.5 2.5h6M2.5 8.5h6" stroke="#999" stroke-width="1"/></svg>
<svg style="left:871px;top:540px" width="11" height="11" viewBox="0 0 11 11"><path d="M0.5 0.5h10v10h-10z" fill="none" stroke="#666"/><path d="M0.5 6.5h7V0.5M4.5 0.5v4" fill="none" stroke="#666"/></svg>
<div class="a" style="left:894px;top:545px;width:5px;height:1.3px;background:#555"></div>
<div class="a" style="left:902px;top:545px;width:76px;height:1px;background:#c6c6c6"></div>
<div class="a" style="left:938px;top:541px;width:3px;height:8px;background:#666"></div>
<svg style="left:980px;top:542px" width="7" height="7" viewBox="0 0 7 7"><path d="M3.5 0v7M0 3.5h7" stroke="#555" stroke-width="1.3"/></svg>
<div class="t" style="left:997.5px;top:536.4px;line-height:17.2px;font-size:8.6px;color:#555;">100%</div>
<div class="a" style="left:0px;top:553px;width:1024px;height:23px;background:#06070a"></div>
<svg style="left:7px;top:559px" width="13" height="12" viewBox="0 0 13 12"><path d="M0 1.7L5.3 1v4.9H0zM6.2 0.9L13 0v5.9H6.2zM0 6.6h5.3v4.9L0 10.8zM6.2 6.6H13V12l-6.8-.9z" fill="#fff"/></svg>
<svg style="left:34.5px;top:559px" width="12" height="12" viewBox="0 0 12 12"><circle cx="6" cy="6" r="5" fill="none" stroke="#fff" stroke-width="1.6"/></svg>
<svg style="left:59.5px;top:559px" width="16" height="12" viewBox="0 0 16 12"><path d="M3.5 0.8h9v10.4h-9z" fill="none" stroke="#fff" stroke-width="1.4"/><path d="M1 2v8M15 2v8" stroke="#fff" stroke-width="1"/></svg>
<svg style="left:90.5px;top:558px" width="12" height="13" viewBox="0 0 12 13"><path d="M11.5 7.5H3.3c.2 2.2 1.8 3.6 4 3.6 1.5 0 2.9-.5 4-1.3v2.3c-1.2.7-2.7 1-4.3 1C3 13.1.5 10.4.5 6.6.5 2.900 3.100 0 6.600 0c3.200 0 5 2.300 5 5.600zM8.800 5.500c0-1.700-.8-2.900-2.300-2.900-1.500 0-2.800 1.200-3.100 2.900z" fill="#1f7ce0"/></svg>
<svg style="left:117.5px;top:558px" width="14" height="12" viewBox="0 0 14 12"><path d="M0.5 1.5h5l1.5 1.5h6.5v8.5H0.5z" fill="#f3d36d"/><path d="M0.5 4h13v7.5H0.5z" fill="#e8c14f"/><path d="M4 7h6v4.5h-1.2v-3h-3.6v3H4z" fill="#3c9ee8"/></svg>
<div class="a" style="left:114px;top:574px;width:21px;height:2px;background:#7fb3e6"></div>
<svg style="left:146.5px;top:557.5px" width="11" height="13" viewBox="0 0 11 13"><path d="M0.5 3.5h10v9h-10z" fill="#fff"/><path d="M3 3.5V2a2.5 2 0 0 1 5 0v1.5" fill="none" stroke="#fff" stroke-width="1"/><path d="M3 6h2.2v2.2H3zM5.8 6H8v2.2H5.8zM3 8.8h2.2V11H3zM5.8 8.8H8V11H5.8z" fill="#06070a"/></svg>
<svg style="left:175px;top:558px" width="12" height="12" viewBox="0 0 12 12"><path d="M3 0.5L0 2.5l3 2 3-2zM9 0.5L6 2.5l3 2 3-2zM0 6.5l3 2 3-2-3-2zM12 6.5l-3 2-3-2 3-2zM3 9.2l3 2 3-2-3-2z" fill="#1e88e5"/></svg>
<svg style="left:201.5px;top:558px" width="12" height="12" viewBox="0 0 12 12"><rect x="0" y="0" width="12" height="12" fill="#2a2a2a"/><path d="M2 2l4 4-4 4z" fill="#e53935"/><path d="M10 2l-4 4 4 4z" fill="#43a047"/><path d="M2 2h8L6 6z" fill="#fdd835"/><path d="M2 10h8L6 6z" fill="#8e24aa"/></svg>
<svg style="left:229px;top:558px" width="12.5" height="13" viewBox="0 0 12.5 13"><rect x="0" y="0" width="12.5" height="13" fill="#3a3a3a"/><text x="3" y="9.5" font-size="10" font-weight="bold" fill="#fff" font-family="Liberation Sans">a</text><path d="M2.5 11c2.5 1 5 1 7.5 0" stroke="#fff" stroke-width="0.8" fill="none"/></svg>
<svg style="left:257.5px;top:559px" width="11.5" height="11.5" viewBox="0 0 11.5 11.5"><circle cx="5.75" cy="5.75" r="5.6" fill="#e8601f"/><circle cx="6.5" cy="5" r="3.6" fill="#3f7fd8"/><path d="M1 4.5c.5-2.5 2.5-4.3 5-4.3-1.5.8-2.3 2-2 3.300.3 1.500 2 2.500 3.800 2.200-1 1.800-3 2.600-4.800 2-1.300-.6-2-2-2-3.200z" fill="#f0892a"/><path d="M9.5 2c1.200 1 1.800 2.600 1.800 3.800" stroke="#ffc437" stroke-width="1.2" fill="none"/></svg>
<svg style="left:285px;top:558.5px" width="12" height="12" viewBox="0 0 12 12"><circle cx="6" cy="6" r="5.8" fill="#db4437"/><path d="M6 6L11.1 3.2A5.8 5.8 0 0 1 6 11.8z" fill="#fdd835"/><path d="M6 6v5.8A5.8 5.8 0 0 1 .9 3.2z" fill="#0f9d58"/><circle cx="6" cy="6" r="2.7" fill="#fff"/><circle cx="6" cy="6" r="2.1" fill="#4285f4"/></svg>
<div class="a" style="left:280.5px;top:574px;width:21px;height:2px;background:#7fb3e6"></div>
<div class="a" style="left:305px;top:553px;width:27px;height:23px;background:#303030"></div>
<div class="a" style="left:305px;top:574px;width:27px;height:2px;background:#7fb3e6"></div>
<svg style="left:312.5px;top:559px" width="12.5" height="11.5" viewBox="0 0 12.5 11.5"><rect x="0" y="0" width="12.5" height="11.5" fill="#1e7145"/><path d="M8 1.2h3.6v9.1H8z" fill="#e8f0eb"/><path d="M8 3.5h3.6M8 5.8h3.6M8 8.1h3.6M9.8 1.2v9.1" stroke="#1e7145" stroke-width="0.7"/><path d="M1.8 2.5l4 6.5M5.8 2.5l-4 6.5" stroke="#fff" stroke-width="1.5"/></svg>
<svg style="left:837px;top:560.5px" width="11" height="11" viewBox="0 0 11 11"><circle cx="5" cy="5" r="4.6" fill="#4aa6e8"/><path d="M1.5 4h7M1.5 6.5h7M5 0.5c-2 2.5-2 6.5 0 9c2-2.5 2-6.5 0-9" stroke="#dbeefb" stroke-width="0.7" fill="none"/><circle cx="8.3" cy="8.3" r="2.3" fill="#d32f2f"/></svg>
<svg style="left:853px;top:561.5px" width="10" height="6" viewBox="0 0 10 6"><path d="M0.5 5.5L5 1l4.5 4.5" fill="none" stroke="#fff" stroke-width="1.2"/></svg>
<svg style="left:868.5px;top:559.5px" width="14" height="9" viewBox="0 0 14 9"><path d="M3 8.5h9.5a2 2 0 0 0 0-4 3.6 3.6 0 0 0-6.8-1.5A2.6 2.6 0 0 0 3 8.5z" fill="#fff"/><path d="M1.5 8.5H5a2 2 0 0 1 0-4 2 2 0 0 0-3.5 4z" fill="#fff"/></svg>
<svg style="left:887.5px;top:561px" width="13" height="8" viewBox="0 0 13 8"><rect x="0.6" y="0.6" width="10.8" height="6.8" fill="none" stroke="#fff" stroke-width="1.2"/><rect x="2" y="2" width="8" height="4" fill="#fff"/><rect x="11.6" y="2.5" width="1.2" height="3" fill="#fff"/></svg>
<svg style="left:907.5px;top:559px" width="11" height="11" viewBox="0 0 11 11"><path d="M0.5 10.5a10 10 0 0 1 10-10M2.5 10.5a8 8 0 0 1 8-8M4.5 10.5a6 6 0 0 1 6-6M6.5 10.5a4 4 0 0 1 4-4M8.5 10.5a2 2 0 0 1 2-2" fill="none" stroke="#fff" stroke-width="0.8"/></svg>
<svg style="left:923px;top:558.5px" width="13" height="12" viewBox="0 0 13 12"><path d="M0.5 4h2.5l3.5-3.2v10.4L3 8H0.5z" fill="none" stroke="#fff" stroke-width="1"/><path d="M8.5 3.5c1 1.5 1 3.5 0 5M10.3 2c1.7 2.3 1.7 5.7 0 8M12 0.8c2.2 3 2.2 7.4 0 10.4" fill="none" stroke="#fff" stroke-width="0.9"/></svg>
<div class="t" style="left:945px;top:556.0px;line-height:17.6px;font-size:8.8px;color:#fff;;transform:scaleX(0.96);transform-origin:0 50%">8:39 PM</div>
<svg style="left:993px;top:559px" width="12" height="12" viewBox="0 0 12 12"><path d="M0 0h12v9.5H7.5L5.5 11.8 3.8 9.5H0z" fill="#fff"/><path d="M2.3 2.5h7.4M2.3 4.5h7.4M2.3 6.6h4.2" stroke="#06070a" stroke-width="0.9"/></svg>
<div class="a" style="left:1020px;top:553px;width:1px;height:23px;background:#444"></div>
</body></html>
